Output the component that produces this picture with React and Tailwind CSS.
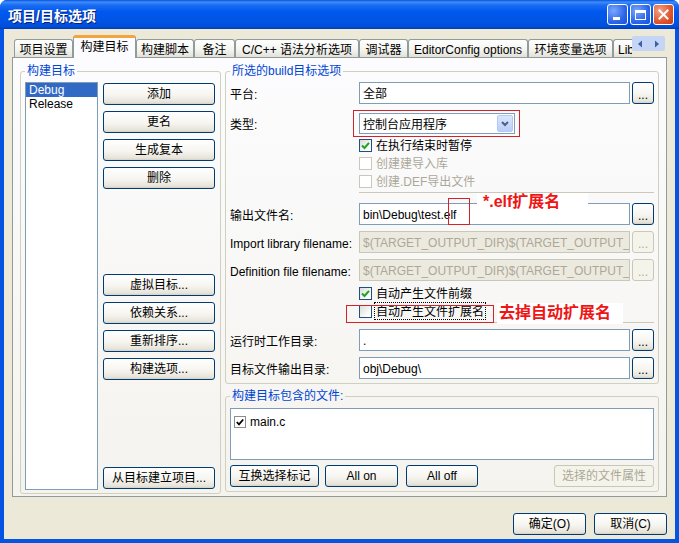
import React from 'react';

const FONT = "font-['Liberation_Sans','Noto_Sans_CJK_SC',sans-serif]";

const BTN =
  'flex items-center justify-center shrink-0 h-[22px] rounded-[3px] border border-[#003c74] bg-[linear-gradient(to_bottom,#ffffff_0%,#f6f5f0_55%,#e7e4da_90%,#d6d0c5_100%)] text-black text-[12px] leading-none';
const BTN_OFF =
  'flex items-center justify-center shrink-0 h-[22px] rounded-[3px] border border-[#c9c7ba] bg-[#f5f4ea] text-[#aca899] text-[12px] leading-none';

function Btn({ w, off, children }) {
  return <div className={`${off ? BTN_OFF : BTN} ${w}`}>{children}</div>;
}

function Field({ label, value, off }) {
  return (
    <div className="flex items-center h-[22px]">
      <div className="w-[129px] shrink-0 whitespace-nowrap pt-[3px]">{label}</div>
      <div
        className={`w-[271px] h-[22px] shrink-0 border px-[3px] pt-[2px] flex items-center overflow-hidden whitespace-nowrap ${
          off ? 'border-[#c9c7ba] bg-[#eceadf] text-[#aca899]' : 'border-[#7f9db9] bg-white text-black'
        }`}
      >
        {value}
      </div>
      <div className="w-[2px] shrink-0" />
      <Btn w="w-[22px]" off={off}>
        <span className="pt-[4px]">...</span>
      </Btn>
    </div>
  );
}

function Check({ checked, off, focus, children }) {
  return (
    <div className="flex items-center h-[18px] pl-[129px]">
      <div
        className={`w-[13px] h-[13px] shrink-0 border flex items-center justify-center ${
          off
            ? 'border-[#cac8bb] bg-white'
            : 'border-[#1c5180] bg-[linear-gradient(135deg,#dcdcd7,#ffffff_80%)]'
        }`}
      >
        {checked && (
          <svg width="9" height="9" viewBox="0 0 9 9">
            <polyline points="1,4.5 3.5,7 8,1.8" fill="none" stroke="#21a121" strokeWidth="2" />
          </svg>
        )}
      </div>
      <span
        className={`ml-[2px] px-[1px] pt-[2px] leading-[14px] whitespace-nowrap ${off ? 'text-[#aca899]' : 'text-black'} ${
          focus ? 'border border-dotted border-black' : 'border border-transparent'
        }`}
      >
        {children}
      </span>
    </div>
  );
}

function Sep() {
  return <div className="ml-[129px] h-px bg-[#cbc8b8]" />;
}

const TABS = [
  { t: '项目设置', w: 'w-[59px]' },
  { t: '构建目标', w: 'w-[63px]', on: true },
  { t: '构建脚本', w: 'w-[58px]' },
  { t: '备注', w: 'w-[41px]' },
  { t: 'C/C++ 语法分析选项', w: 'w-[124px]' },
  { t: '调试器', w: 'w-[49px]' },
  { t: 'EditorConfig options', w: 'w-[120px]' },
  { t: '环境变量选项', w: 'w-[85px]' },
];

export default function App() {
  return (
    <div className={`relative w-[679px] h-[543px] flex flex-col bg-[#0553e1] rounded-t-[7px] overflow-hidden text-[12px] ${FONT}`}>
      {/* Title bar */}
      <div className="h-[29px] shrink-0 flex items-center pl-[8px] pr-[5px] bg-[linear-gradient(to_bottom,#0a4fe0_0%,#3d8df8_7%,#1a6cf2_18%,#0058ee_40%,#0054e3_75%,#004dd9_92%,#003cb0_100%)]">
        <span className="text-white font-bold text-[14px] leading-none pt-[2px] [text-shadow:1px_1px_0_#0a1f7a]">项目/目标选项</span>
        <div className="ml-auto flex gap-[2px]">
          <div className="w-[21px] h-[21px] rounded-[3px] border border-white bg-[radial-gradient(circle_at_30%_30%,#7aa7fb,#2d66ea_60%,#1d4fd6)] flex items-end pl-[5px] pb-[4px]">
            <div className="w-[7px] h-[3px] bg-white" />
          </div>
          <div className="w-[21px] h-[21px] rounded-[3px] border border-white bg-[radial-gradient(circle_at_30%_30%,#7aa7fb,#2d66ea_60%,#1d4fd6)] flex items-center justify-center">
            <div className="w-[11px] h-[10px] border border-white border-t-[3px]" />
          </div>
          <div className="w-[21px] h-[21px] rounded-[3px] border border-white bg-[radial-gradient(circle_at_30%_30%,#f2a487,#e0552c_60%,#c63c16)] flex items-center justify-center">
            <svg width="11" height="11" viewBox="0 0 11 11">
              <path d="M1.5 1.5 L9.5 9.5 M9.5 1.5 L1.5 9.5" stroke="white" strokeWidth="2" strokeLinecap="square" />
            </svg>
          </div>
        </div>
      </div>

      {/* Client area */}
      <div className="flex-1 mx-[4px] mb-[4px] bg-[#ece9d8] px-[8px] pt-[6px] flex flex-col">
        {/* Tab strip */}
        <div className="h-[22px] flex items-end pl-[2px]">
          {TABS.map((tab) =>
            tab.on ? (
              <div
                key={tab.t}
                className={`${tab.w} relative z-10 h-[23px] -mb-px shrink-0 rounded-t-[3px] border-x border-[#919b9c] border-t-[3px] border-t-[#f5a33b] bg-[#fcfcfe] flex items-center justify-center whitespace-nowrap pb-[2px]`}
              >
                {tab.t}
              </div>
            ) : (
              <div
                key={tab.t}
                className={`${tab.w} h-[18px] shrink-0 rounded-t-[3px] border border-b-0 border-[#919b9c] bg-[linear-gradient(to_bottom,#ffffff,#f3f3ef_60%,#e2e1d8)] flex items-center justify-center whitespace-nowrap pt-[2px]`}
              >
                {tab.t}
              </div>
            )
          )}
          <div className="w-[19px] h-[18px] shrink-0 rounded-tl-[3px] border-l border-t border-[#919b9c] bg-[linear-gradient(to_bottom,#ffffff,#f3f3ef_60%,#e2e1d8)] overflow-hidden pl-[4px] pt-[2px] leading-[16px] whitespace-nowrap">
            Lib
          </div>
          <div className="self-start mt-[1px] w-[33px] h-[15px] flex bg-[#c5d5f6] rounded-[2px]">
            <div className="flex-1 flex items-center justify-center">
              <svg width="6" height="8" viewBox="0 0 6 8">
                <path d="M5 0.5 L1 4 L5 7.5 Z" fill="#3f5ea8" />
              </svg>
            </div>
            <div className="flex-1 flex items-center justify-center">
              <svg width="6" height="8" viewBox="0 0 6 8">
                <path d="M1 0.5 L5 4 L1 7.5 Z" fill="#3f5ea8" />
              </svg>
            </div>
          </div>
        </div>

        {/* Tab panel */}
        <div className="w-[655px] h-[440px] border border-[#919b9c] bg-[linear-gradient(to_bottom,#fcfcfe,#f4f3ee)] pt-[6px] pl-[7px] flex gap-[4px]">
          {/* Build targets group */}
          <fieldset className="w-[201px] h-[430px] shrink-0 border border-[#d0d0bf] rounded-[3px] px-[4px]">
            <legend className="px-[2px] leading-[14px] text-[#0046d5]">构建目标</legend>
            <div className="flex gap-[5px] pt-[4px]">
              <div className="w-[73px] h-[408px] shrink-0 border border-[#7f9db9] bg-white">
                <div className="h-[14px] leading-[14px] px-[3px] bg-[#316ac5] text-white">Debug</div>
                <div className="h-[14px] leading-[14px] px-[3px]">Release</div>
              </div>
              <div className="flex flex-col pt-[1px]">
                <Btn w="w-[112px]">添加</Btn>
                <div className="mt-[6px]"><Btn w="w-[112px]">更名</Btn></div>
                <div className="mt-[6px]"><Btn w="w-[112px]">生成复本</Btn></div>
                <div className="mt-[6px]"><Btn w="w-[112px]">删除</Btn></div>
                <div className="mt-[85px]"><Btn w="w-[112px]">虚拟目标...</Btn></div>
                <div className="mt-[6px]"><Btn w="w-[112px]">依赖关系...</Btn></div>
                <div className="mt-[6px]"><Btn w="w-[112px]">重新排序...</Btn></div>
                <div className="mt-[6px]"><Btn w="w-[112px]">构建选项...</Btn></div>
                <div className="mt-[87px]"><Btn w="w-[112px]">从目标建立项目...</Btn></div>
              </div>
            </div>
          </fieldset>

          {/* Right column */}
          <div className="flex flex-col gap-[5px]">
            <fieldset className="w-[434px] border border-[#d0d0bf] rounded-[3px] px-[4px] pb-[4px]">
              <legend className="px-[2px] leading-[14px] text-[#0046d5]">所选的build目标选项</legend>
              <div className="mt-[4px]">
                <Field label="平台:" value="全部" />
              </div>
              <div className="mt-[9px] flex items-center h-[21px]">
                <div className="w-[129px] shrink-0 pt-[3px]">类型:</div>
                <div className="w-[156px] h-[21px] border border-[#7f9db9] bg-white flex items-center pl-[3px] pr-px">
                  <span className="flex-1 pt-[2px]">控制台应用程序</span>
                  <div className="w-[16px] h-[17px] rounded-[2px] border border-[#b3c9f5] bg-[linear-gradient(to_bottom,#dce7fd,#b9cdf7)] flex items-center justify-center">
                    <svg width="8" height="6" viewBox="0 0 8 6">
                      <path d="M1 1 L4 4 L7 1" fill="none" stroke="#4d6185" strokeWidth="2" />
                    </svg>
                  </div>
                </div>
              </div>
              <div className="mt-[2px]">
                <Check checked>在执行结束时暂停</Check>
                <Check off>创建建导入库</Check>
                <Check off>创建.DEF导出文件</Check>
              </div>
              <div className="mt-[2px]">
                <Sep />
              </div>
              <div className="mt-[10px]">
                <Field label="输出文件名:" value="bin\Debug\test.elf" />
              </div>
              <div className="mt-[6px]">
                <Field label="Import library filename:" value="$(TARGET_OUTPUT_DIR)$(TARGET_OUTPUT_" off />
              </div>
              <div className="mt-[6px]">
                <Field label="Definition file filename:" value="$(TARGET_OUTPUT_DIR)$(TARGET_OUTPUT_" off />
              </div>
              <div className="mt-[3px]">
                <Check checked>自动产生文件前缀</Check>
                <Check focus>自动产生文件扩展名</Check>
              </div>
              <div className="mt-[2px]">
                <Sep />
              </div>
              <div className="mt-[6px]">
                <Field label="运行时工作目录:" value="." />
              </div>
              <div className="mt-[6px]">
                <Field label="目标文件输出目录:" value="obj\Debug\" />
              </div>
            </fieldset>

            <fieldset className="w-[434px] border border-[#d0d0bf] rounded-[3px] px-[4px] pb-[4px]">
              <legend className="px-[2px] leading-[14px] text-[#0046d5]">构建目标包含的文件:</legend>
              <div className="mt-[5px] w-[424px] h-[52px] border border-[#7f9db9] bg-white pl-[3px] pt-[6px]">
                <div className="flex items-center gap-[4px]">
                  <div className="w-[12px] h-[12px] border border-[#8c8c8c] bg-white flex items-center justify-center">
                    <svg width="8" height="8" viewBox="0 0 8 8">
                      <polyline points="0.8,4 3,6.3 7.2,1.5" fill="none" stroke="#000" strokeWidth="1.8" />
                    </svg>
                  </div>
                  <span className="leading-[14px]">main.c</span>
                </div>
              </div>
              <div className="mt-[5px] flex">
                <Btn w="w-[89px]">互换选择标记</Btn>
                <div className="ml-[6px]"><Btn w="w-[73px]">All on</Btn></div>
                <div className="ml-[8px]"><Btn w="w-[72px]">All off</Btn></div>
                <div className="ml-auto"><Btn w="w-[100px]" off>选择的文件属性</Btn></div>
              </div>
            </fieldset>
          </div>
        </div>

        {/* Dialog buttons */}
        <div className="mt-[16px] flex justify-end gap-[8px]">
          <Btn w="w-[73px]">确定(O)</Btn>
          <Btn w="w-[73px]">取消(C)</Btn>
        </div>
      </div>

      {/* Red annotations drawn over the dialog */}
      <div className="absolute left-[353px] top-[110px] w-[167px] h-[27px] border border-[#d5222a]" />
      <div className="absolute left-[448px] top-[198px] w-[22px] h-[27px] border border-[#d5222a]" />
      <div className="absolute left-[477px] top-[193px] w-[111px] h-[18px] bg-white pl-[6px] text-[16px] leading-[18px] font-bold text-[#f01515] whitespace-nowrap">
        *.elf扩展名
      </div>
      <div className="absolute left-[346px] top-[305px] w-[148px] h-[18px] border border-[#d5222a]" />
      <div className="absolute left-[497px] top-[303px] w-[126px] h-[21px] bg-white pl-[2px] text-[16px] leading-[19px] font-bold text-[#f01515] whitespace-nowrap">
        去掉自动扩展名
      </div>
    </div>
  );
}
